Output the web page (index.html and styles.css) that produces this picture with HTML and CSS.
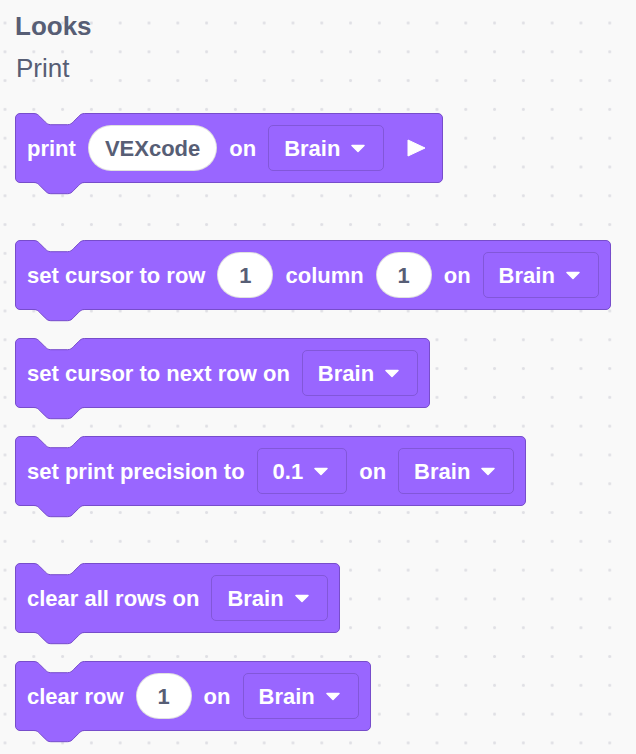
FILE: index.html
```html
<!DOCTYPE html>
<html lang="en">
<head>
    <meta charset="UTF-8">
    <meta name="viewport" content="width=device-width, initial-scale=1.0">
    <title>Looks - Print</title>
    <link rel="stylesheet" href="styles.css">
</head>
<body>

    <div class="palette">
        <h2 class="category">Looks</h2>
        <h3 class="label">Print</h3>

        <div class="block">
            <svg class="notch" width="53" height="13"><path class="cut" d="M1 0 V0.5 c2.8 0 4.2 1.4 5.6 2.8 l5.6 5.6 c1.4 1.4 2.8 2.8 5.6 2.8 h16.8 c2.8 0 4.2 -1.4 5.6 -2.8 l5.6 -5.6 c1.4 -1.4 2.8 -2.8 5.6 -2.8 V0 Z"/><path class="edge" d="M1 0.5 c2.8 0 4.2 1.4 5.6 2.8 l5.6 5.6 c1.4 1.4 2.8 2.8 5.6 2.8 h16.8 c2.8 0 4.2 -1.4 5.6 -2.8 l5.6 -5.6 c1.4 -1.4 2.8 -2.8 5.6 -2.8"/></svg>
            <span class="text">print</span>
            <span class="field">VEXcode</span>
            <span class="text">on</span>
            <span class="menu">Brain <svg class="caret" width="14" height="9"><path d="M1 1.5 H13 L7 7.5 Z"/></svg></span>
            <svg class="run" width="18" height="18"><path d="M1 1 L18 9 L1 17 Z"/></svg>
            <svg class="tab" width="53" height="13"><path class="fill" d="M1 0 V0.5 c2.8 0 4.2 1.4 5.6 2.8 l5.6 5.6 c1.4 1.4 2.8 2.8 5.6 2.8 h16.8 c2.8 0 4.2 -1.4 5.6 -2.8 l5.6 -5.6 c1.4 -1.4 2.8 -2.8 5.6 -2.8 V0 Z"/><path class="edge" d="M1 0.5 c2.8 0 4.2 1.4 5.6 2.8 l5.6 5.6 c1.4 1.4 2.8 2.8 5.6 2.8 h16.8 c2.8 0 4.2 -1.4 5.6 -2.8 l5.6 -5.6 c1.4 -1.4 2.8 -2.8 5.6 -2.8"/></svg>
        </div>

        <div class="block spaced">
            <svg class="notch" width="53" height="13"><path class="cut" d="M1 0 V0.5 c2.8 0 4.2 1.4 5.6 2.8 l5.6 5.6 c1.4 1.4 2.8 2.8 5.6 2.8 h16.8 c2.8 0 4.2 -1.4 5.6 -2.8 l5.6 -5.6 c1.4 -1.4 2.8 -2.8 5.6 -2.8 V0 Z"/><path class="edge" d="M1 0.5 c2.8 0 4.2 1.4 5.6 2.8 l5.6 5.6 c1.4 1.4 2.8 2.8 5.6 2.8 h16.8 c2.8 0 4.2 -1.4 5.6 -2.8 l5.6 -5.6 c1.4 -1.4 2.8 -2.8 5.6 -2.8"/></svg>
            <span class="text">set cursor to row</span>
            <span class="field num">1</span>
            <span class="text">column</span>
            <span class="field num">1</span>
            <span class="text">on</span>
            <span class="menu">Brain <svg class="caret" width="14" height="9"><path d="M1 1.5 H13 L7 7.5 Z"/></svg></span>
            <svg class="tab" width="53" height="13"><path class="fill" d="M1 0 V0.5 c2.8 0 4.2 1.4 5.6 2.8 l5.6 5.6 c1.4 1.4 2.8 2.8 5.6 2.8 h16.8 c2.8 0 4.2 -1.4 5.6 -2.8 l5.6 -5.6 c1.4 -1.4 2.8 -2.8 5.6 -2.8 V0 Z"/><path class="edge" d="M1 0.5 c2.8 0 4.2 1.4 5.6 2.8 l5.6 5.6 c1.4 1.4 2.8 2.8 5.6 2.8 h16.8 c2.8 0 4.2 -1.4 5.6 -2.8 l5.6 -5.6 c1.4 -1.4 2.8 -2.8 5.6 -2.8"/></svg>
        </div>

        <div class="block">
            <svg class="notch" width="53" height="13"><path class="cut" d="M1 0 V0.5 c2.8 0 4.2 1.4 5.6 2.8 l5.6 5.6 c1.4 1.4 2.8 2.8 5.6 2.8 h16.8 c2.8 0 4.2 -1.4 5.6 -2.8 l5.6 -5.6 c1.4 -1.4 2.8 -2.8 5.6 -2.8 V0 Z"/><path class="edge" d="M1 0.5 c2.8 0 4.2 1.4 5.6 2.8 l5.6 5.6 c1.4 1.4 2.8 2.8 5.6 2.8 h16.8 c2.8 0 4.2 -1.4 5.6 -2.8 l5.6 -5.6 c1.4 -1.4 2.8 -2.8 5.6 -2.8"/></svg>
            <span class="text">set cursor to next row on</span>
            <span class="menu">Brain <svg class="caret" width="14" height="9"><path d="M1 1.5 H13 L7 7.5 Z"/></svg></span>
            <svg class="tab" width="53" height="13"><path class="fill" d="M1 0 V0.5 c2.8 0 4.2 1.4 5.6 2.8 l5.6 5.6 c1.4 1.4 2.8 2.8 5.6 2.8 h16.8 c2.8 0 4.2 -1.4 5.6 -2.8 l5.6 -5.6 c1.4 -1.4 2.8 -2.8 5.6 -2.8 V0 Z"/><path class="edge" d="M1 0.5 c2.8 0 4.2 1.4 5.6 2.8 l5.6 5.6 c1.4 1.4 2.8 2.8 5.6 2.8 h16.8 c2.8 0 4.2 -1.4 5.6 -2.8 l5.6 -5.6 c1.4 -1.4 2.8 -2.8 5.6 -2.8"/></svg>
        </div>

        <div class="block">
            <svg class="notch" width="53" height="13"><path class="cut" d="M1 0 V0.5 c2.8 0 4.2 1.4 5.6 2.8 l5.6 5.6 c1.4 1.4 2.8 2.8 5.6 2.8 h16.8 c2.8 0 4.2 -1.4 5.6 -2.8 l5.6 -5.6 c1.4 -1.4 2.8 -2.8 5.6 -2.8 V0 Z"/><path class="edge" d="M1 0.5 c2.8 0 4.2 1.4 5.6 2.8 l5.6 5.6 c1.4 1.4 2.8 2.8 5.6 2.8 h16.8 c2.8 0 4.2 -1.4 5.6 -2.8 l5.6 -5.6 c1.4 -1.4 2.8 -2.8 5.6 -2.8"/></svg>
            <span class="text">set print precision to</span>
            <span class="menu">0.1 <svg class="caret" width="14" height="9"><path d="M1 1.5 H13 L7 7.5 Z"/></svg></span>
            <span class="text">on</span>
            <span class="menu">Brain <svg class="caret" width="14" height="9"><path d="M1 1.5 H13 L7 7.5 Z"/></svg></span>
            <svg class="tab" width="53" height="13"><path class="fill" d="M1 0 V0.5 c2.8 0 4.2 1.4 5.6 2.8 l5.6 5.6 c1.4 1.4 2.8 2.8 5.6 2.8 h16.8 c2.8 0 4.2 -1.4 5.6 -2.8 l5.6 -5.6 c1.4 -1.4 2.8 -2.8 5.6 -2.8 V0 Z"/><path class="edge" d="M1 0.5 c2.8 0 4.2 1.4 5.6 2.8 l5.6 5.6 c1.4 1.4 2.8 2.8 5.6 2.8 h16.8 c2.8 0 4.2 -1.4 5.6 -2.8 l5.6 -5.6 c1.4 -1.4 2.8 -2.8 5.6 -2.8"/></svg>
        </div>

        <div class="block spaced">
            <svg class="notch" width="53" height="13"><path class="cut" d="M1 0 V0.5 c2.8 0 4.2 1.4 5.6 2.8 l5.6 5.6 c1.4 1.4 2.8 2.8 5.6 2.8 h16.8 c2.8 0 4.2 -1.4 5.6 -2.8 l5.6 -5.6 c1.4 -1.4 2.8 -2.8 5.6 -2.8 V0 Z"/><path class="edge" d="M1 0.5 c2.8 0 4.2 1.4 5.6 2.8 l5.6 5.6 c1.4 1.4 2.8 2.8 5.6 2.8 h16.8 c2.8 0 4.2 -1.4 5.6 -2.8 l5.6 -5.6 c1.4 -1.4 2.8 -2.8 5.6 -2.8"/></svg>
            <span class="text">clear all rows on</span>
            <span class="menu">Brain <svg class="caret" width="14" height="9"><path d="M1 1.5 H13 L7 7.5 Z"/></svg></span>
            <svg class="tab" width="53" height="13"><path class="fill" d="M1 0 V0.5 c2.8 0 4.2 1.4 5.6 2.8 l5.6 5.6 c1.4 1.4 2.8 2.8 5.6 2.8 h16.8 c2.8 0 4.2 -1.4 5.6 -2.8 l5.6 -5.6 c1.4 -1.4 2.8 -2.8 5.6 -2.8 V0 Z"/><path class="edge" d="M1 0.5 c2.8 0 4.2 1.4 5.6 2.8 l5.6 5.6 c1.4 1.4 2.8 2.8 5.6 2.8 h16.8 c2.8 0 4.2 -1.4 5.6 -2.8 l5.6 -5.6 c1.4 -1.4 2.8 -2.8 5.6 -2.8"/></svg>
        </div>

        <div class="block">
            <svg class="notch" width="53" height="13"><path class="cut" d="M1 0 V0.5 c2.8 0 4.2 1.4 5.6 2.8 l5.6 5.6 c1.4 1.4 2.8 2.8 5.6 2.8 h16.8 c2.8 0 4.2 -1.4 5.6 -2.8 l5.6 -5.6 c1.4 -1.4 2.8 -2.8 5.6 -2.8 V0 Z"/><path class="edge" d="M1 0.5 c2.8 0 4.2 1.4 5.6 2.8 l5.6 5.6 c1.4 1.4 2.8 2.8 5.6 2.8 h16.8 c2.8 0 4.2 -1.4 5.6 -2.8 l5.6 -5.6 c1.4 -1.4 2.8 -2.8 5.6 -2.8"/></svg>
            <span class="text">clear row</span>
            <span class="field num">1</span>
            <span class="text">on</span>
            <span class="menu">Brain <svg class="caret" width="14" height="9"><path d="M1 1.5 H13 L7 7.5 Z"/></svg></span>
            <svg class="tab" width="53" height="13"><path class="fill" d="M1 0 V0.5 c2.8 0 4.2 1.4 5.6 2.8 l5.6 5.6 c1.4 1.4 2.8 2.8 5.6 2.8 h16.8 c2.8 0 4.2 -1.4 5.6 -2.8 l5.6 -5.6 c1.4 -1.4 2.8 -2.8 5.6 -2.8 V0 Z"/><path class="edge" d="M1 0.5 c2.8 0 4.2 1.4 5.6 2.8 l5.6 5.6 c1.4 1.4 2.8 2.8 5.6 2.8 h16.8 c2.8 0 4.2 -1.4 5.6 -2.8 l5.6 -5.6 c1.4 -1.4 2.8 -2.8 5.6 -2.8"/></svg>
        </div>
    </div>

</body>
</html>
```

FILE: styles.css
```css
html {
    background-color: #f9f9f9;
}
body {
    margin: 0;
    padding: 0;
    min-height: 754px;
    font-family: "Liberation Sans", Arial, sans-serif;
    background-color: #f9f9f9;
    background-image: radial-gradient(circle, #e0e0e5 1.2px, transparent 1.7px);
    background-size: 28.8px 28.8px;
    background-position: -9.4px 8.6px;
}
.palette {
    display: flex;
    flex-direction: column;
    align-items: flex-start;
    padding: 11px 15px 0 15px;
}
.category {
    margin: 0;
    font-size: 26px;
    line-height: 30px;
    font-weight: bold;
    color: #575e75;
}
.label {
    margin: 12px 0 0 1px;
    font-size: 26px;
    line-height: 30px;
    font-weight: normal;
    color: #575e75;
}
.block {
    position: relative;
    display: flex;
    align-items: center;
    gap: 12px;
    margin-top: 28px;
    padding: 11px;
    height: 46px;
    background-color: #9966ff;
    border: 1px solid #774dcb;
    border-radius: 5px;
    color: white;
    font-size: 22px;
    font-weight: bold;
    line-height: 46px;
    white-space: nowrap;
}
.label + .block {
    margin-top: 30px;
}
.block.spaced {
    margin-top: 57px;
}
.text {
    padding-top: 2px;
    line-height: 44px;
}
.notch {
    position: absolute;
    top: -1px;
    left: 17px;
}
.notch .cut {
    fill: #f9f9f9;
}
.tab {
    position: absolute;
    top: 100%;
    left: 17px;
}
.tab .fill {
    fill: #9966ff;
}
.notch .edge,
.tab .edge {
    fill: none;
    stroke: #774dcb;
    stroke-width: 1;
}
.field {
    box-sizing: border-box;
    height: 46px;
    padding: 2px 16px 0 16px;
    background-color: white;
    border: 1px solid rgba(0, 0, 0, 0.12);
    border-radius: 23px;
    color: #575e75;
    line-height: 42px;
    text-align: center;
}
.field.num {
    min-width: 56px;
    padding: 2px 0 0 0;
}
.menu {
    box-sizing: border-box;
    display: flex;
    align-items: center;
    height: 46px;
    padding: 2px 18px 0 15px;
    border: 1px solid #8257d9;
    border-radius: 5px;
    line-height: 42px;
}
.caret {
    margin: -2px 0 0 11px;
}
.caret path {
    fill: white;
    stroke: white;
    stroke-width: 1.5;
    stroke-linejoin: round;
}
.run {
    margin: 0 6px 0 11px;
}
.run path {
    fill: white;
    stroke: white;
    stroke-width: 1;
    stroke-linejoin: round;
}
```
